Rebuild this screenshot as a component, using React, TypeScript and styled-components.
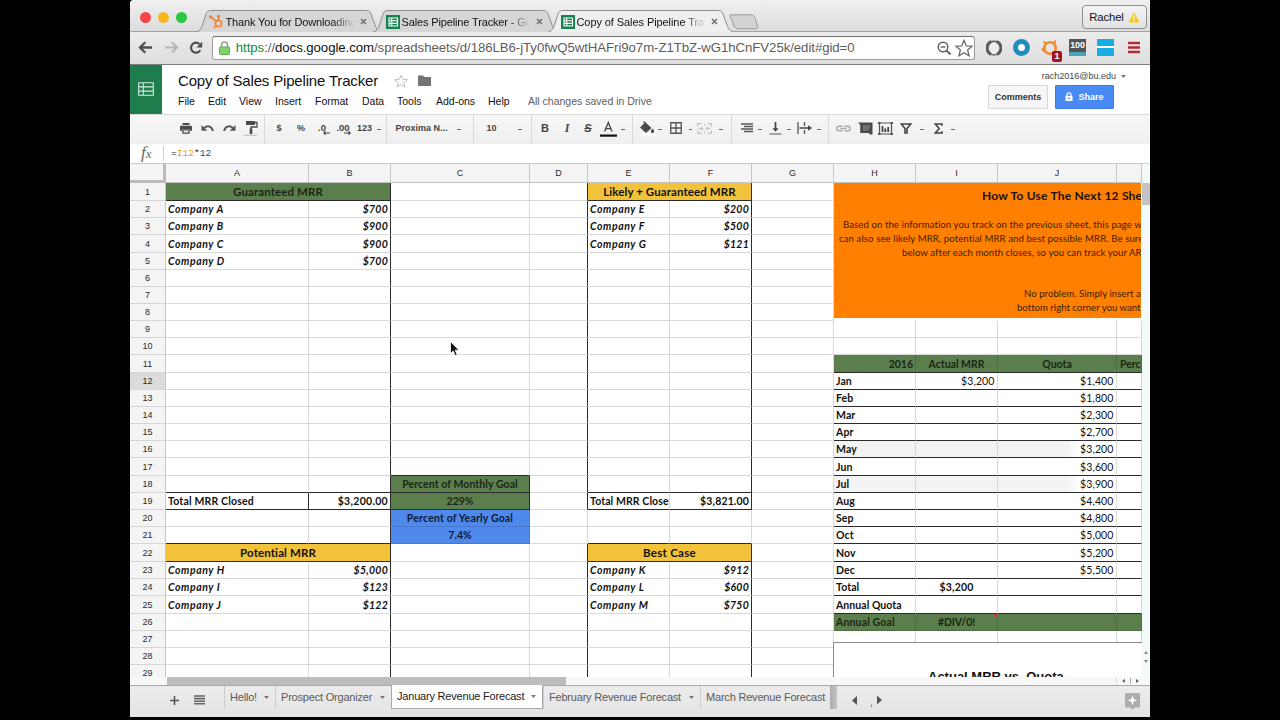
import React from "react";
import styled, { createGlobalStyle, css } from "styled-components";

const GlobalStyle = createGlobalStyle`
  * { box-sizing: border-box; }
  html, body { margin: 0; padding: 0; background: #000; }
  body { width: 1280px; height: 720px; overflow: hidden; font-family: "Liberation Sans", Arial, sans-serif; }
  svg { display: block; flex: none; }
`;

const Stage = styled.div`
  width: 1280px;
  height: 720px;
  padding: 0 130px 3px;
  background: #000;
`;

const Window = styled.div`
  position: relative;
  width: 1020px;
  height: 717px;
  display: flex;
  flex-direction: column;
  overflow: hidden;
  background: #fff;
  border-radius: 4px 0 0 0;
`;

/* ---------- Browser chrome ---------- */

const TitleBar = styled.div`
  flex: none;
  height: 32px;
  display: flex;
  padding: 0 3px 0 9.5px;
  background: linear-gradient(#f0f0f0, #dcdcdc);
  box-shadow: inset 0 -1px 0 #a2a2a2;
`;

const Lights = styled.div`
  display: flex;
  gap: 7px;
  padding-top: 11.5px;
  width: 56.5px;
`;

const Light = styled.span<{ $color: string }>`
  width: 11px;
  height: 11px;
  border-radius: 50%;
  background: ${(p) => p.$color};
`;

const TabStrip = styled.div`
  flex: 1;
  display: flex;
  padding-top: 10px;
`;

const TabBox = styled.div<{ $active?: boolean; $step: number }>`
  position: relative;
  width: 186px;
  height: 22px;
  margin-right: ${(p) => p.$step - 186}px;
  z-index: ${(p) => (p.$active ? 2 : 1)};
  display: flex;
  align-items: center;
  padding: 1px 0 0 13px;
  & > * { position: relative; }
`;

const TabShape = styled.svg`
  && { position: absolute; }
  inset: 0;
`;

const TabTitle = styled.span<{ $ls: number }>`
  width: 130px;
  margin-left: 1.5px;
  overflow: hidden;
  white-space: nowrap;
  font-size: 11px;
  letter-spacing: ${(p) => p.$ls}px;
  color: #111;
  mask-image: linear-gradient(90deg, #000 82%, transparent 99%);
`;

const TabClose = styled.svg`
  margin-left: 4.5px;
`;

const ProfileButton = styled.div`
  align-self: flex-start;
  margin-top: 5px;
  width: 65px;
  height: 24px;
  display: flex;
  align-items: center;
  justify-content: center;
  gap: 4px;
  border: 1px solid #8f8f8f;
  border-radius: 4px;
  background: linear-gradient(#f3f3f3, #e2e2e2);
  font-size: 11.3px;
  letter-spacing: -0.1px;
  color: #111;
`;

const NavBar = styled.div`
  flex: none;
  height: 33px;
  display: flex;
  align-items: center;
  padding: 0 8px 1px 8px;
  background: linear-gradient(#ececec, #dedede);
  border-bottom: 1px solid #7d7d7d;
`;

const NavIcons = styled.div`
  width: 74px;
  display: flex;
  align-items: center;
  gap: 10.5px;
`;

const Address = styled.div`
  width: 765px;
  height: 24px;
  display: flex;
  align-items: center;
  padding: 0 1px 0 6px;
  border: 1px solid #9c9c9c;
  border-top-color: #6f6f6f;
  border-radius: 3px;
  background: #fff;
`;

const Url = styled.span`
  flex: 1;
  margin-left: 6px;
  font-size: 13.2px;
  letter-spacing: -0.05px;
  white-space: nowrap;
  color: #5d5d5d;
  b { font-weight: 400; color: #111; }
  i { font-style: normal; color: #168a2c; }
`;

const Extensions = styled.div`
  margin-left: 10px;
  display: flex;
  align-items: center;
  gap: 11px;
`;

const ExtSlot = styled.div`
  position: relative;
  width: 17px;
  height: 18px;
  display: flex;
  align-items: center;
  justify-content: center;
`;

const Badge = styled.span`
  position: absolute;
  right: -4px;
  bottom: -5px;
  width: 10px;
  height: 11px;
  border-radius: 2px;
  background: #a31426;
  color: #fff;
  font: bold 9px/11px "Liberation Sans", sans-serif;
  text-align: center;
`;

const Hundred = styled.div`
  width: 17px;
  height: 17px;
  background: #555;
  border-bottom: 4px solid #4aa3bd;
  color: #fff;
  font: bold 9px/13px "Liberation Sans", sans-serif;
  letter-spacing: -0.1px;
  text-align: center;
`;

const CyanBlock = styled.div`
  width: 17px;
  height: 17px;
  background: linear-gradient(#16aee5 7px, #fff 7px, #fff 9px, #16aee5 9px);
`;

/* ---------- Document header ---------- */

const DocHeader = styled.div`
  flex: none;
  height: 49px;
  display: flex;
  background: #fff;
`;

const SheetsLogo = styled.div`
  width: 32px;
  height: 49px;
  display: flex;
  align-items: center;
  justify-content: center;
  padding-bottom: 2px;
  background: #1f7d4d;
`;

const DocInfo = styled.div`
  flex: 1;
  padding: 5px 0 0 16px;
`;

const TitleRow = styled.div`
  height: 21px;
  display: flex;
  align-items: center;
`;

const DocTitle = styled.span`
  width: 216px;
  font-size: 15px;
  letter-spacing: -0.17px;
  color: #111;
  white-space: nowrap;
`;

const FolderSlot = styled.span`
  margin-left: 10px;
`;

const MenuRow = styled.div`
  height: 20px;
  display: grid;
  grid-template-columns: 30px 31px 36px 40px 47px 35px 39px 52px 40px 140px;
  align-items: center;
  font-size: 10.5px;
  color: #111;
  white-space: nowrap;
`;

const Saved = styled.span`
  color: #5e5e5e;
`;

const Account = styled.div`
  width: 170px;
  display: flex;
  flex-direction: column;
  align-items: flex-end;
  padding: 4px 24px 0 0;
`;

const Email = styled.div`
  height: 14px;
  display: flex;
  align-items: center;
  gap: 5px;
  font-size: 9px;
  color: #444;
`;

const Actions = styled.div`
  display: flex;
  gap: 7px;
  margin: 2px 12px 0 0;
`;

const ActionButton = styled.div<{ $primary?: boolean }>`
  width: ${(p) => (p.$primary ? 59 : 60)}px;
  height: 24px;
  display: flex;
  align-items: center;
  justify-content: center;
  gap: 5px;
  padding-bottom: 1px;
  border: 1px solid ${(p) => (p.$primary ? "#4079e6" : "#d6d6d6")};
  border-radius: 1px;
  background: ${(p) => (p.$primary ? "#4a8af4" : "#f6f6f6")};
  color: ${(p) => (p.$primary ? "#fff" : "#333")};
  font-size: 9px;
  font-weight: 700;
  letter-spacing: 0.03px;
`;

/* ---------- Toolbar ---------- */

const Toolbar = styled.div`
  flex: none;
  height: 30px;
  display: flex;
  align-items: stretch;
  padding-left: 44.5px;
  border-top: 1px solid #d9d9d9;
  background: linear-gradient(#f7f7f7, #efefef);
`;

const Slot = styled.div<{ $w: number; $left?: number }>`
  flex: none;
  width: ${(p) => p.$w}px;
  display: flex;
  align-items: center;
  justify-content: ${(p) => (p.$left ? "flex-start" : "center")};
  padding: 0 0 3px ${(p) => p.$left || 0}px;
  font-size: 9px;
  font-weight: 700;
  color: #444;
  white-space: nowrap;
`;

const Divider = styled.div<{ $w: number }>`
  flex: none;
  width: ${(p) => p.$w}px;
  background: linear-gradient(#dadada, #dadada) center / 1px 100% no-repeat;
`;

const Dash = styled.span`
  width: 4px;
  height: 1.5px;
  margin-top: 3px;
  background: #6c6c6c;
`;

const Glyph = styled.span<{ $size: number; $italic?: boolean; $strike?: boolean; $serif?: boolean }>`
  font: ${(p) => (p.$italic ? "italic" : "normal")} bold ${(p) => p.$size}px
    ${(p) => (p.$serif ? '"Liberation Serif", serif' : '"Liberation Sans", sans-serif')};
  text-decoration: ${(p) => (p.$strike ? "line-through" : "none")};
`;

const FormulaBar = styled.div`
  flex: none;
  height: 19px;
  display: flex;
  align-items: center;
  padding-left: 11px;
`;

const Fx = styled.span`
  width: 23px;
  height: 15px;
  border-right: 1px solid #d0d0d0;
  font: italic 17px/14px "Liberation Serif", serif;
  color: #666;
  small { font-size: 13px; }
`;

const Formula = styled.span`
  margin-left: 7px;
  font: 9.6px "Liberation Mono", monospace;
  color: #222;
  i { font-style: normal; color: #f0a000; }
  b { font-weight: 400; color: #1155a0; }
`;

/* ---------- Sheet ---------- */

const ROWS = [18, 17, 17, 18, 17, 17, 17, 17, 17, 17, 18, 17, 17, 17, 17, 17, 18, 17, 17, 17, 17, 18, 17, 17, 18, 17, 17, 17, 17];
const COLS = "ABCDEFGHIJK";

const SheetArea = styled.div`
  flex: none;
  height: 514px;
  display: flex;
  overflow: hidden;
`;

const Grid = styled.div`
  position: relative;
  width: 1012px;
  height: 514px;
  overflow: hidden;
  display: grid;
  grid-template-columns: 36px 143px 82px 139px 58px 82px 82px 82px 82px 82px 119px 25px;
  grid-template-rows: 20px ${ROWS.map((h) => h + "px").join(" ")};
`;

const Head = styled.div<{ $selected?: boolean; $row?: boolean }>`
  display: flex;
  align-items: center;
  justify-content: center;
  border-right: 1px solid #c6c6c6;
  border-bottom: 1px solid ${(p) => (p.$row ? "#d5d5d5" : "#c2c2c2")};
  border-top: ${(p) => (p.$row ? "0" : "1px solid #c9c9c9")};
  background: ${(p) => (p.$selected ? "#dcdcdc" : "#f4f4f4")};
  font-size: 9px;
  color: #2a2a2a;
`;

const Corner = styled.div`
  border-top: 1px solid #c9c9c9;
  border-right: 3px solid #bcbcbc;
  border-bottom: 3px solid #bcbcbc;
  background: #f4f4f4;
`;

interface CellStyle {
  bg?: string;
  align?: "left" | "center" | "right";
  bold?: boolean;
  italic?: boolean;
  size?: number;
  ls?: number;
  pad?: number;
  right?: boolean;
  bottom?: boolean;
  color?: string;
}

const INK = "#2b2b2b";

const Cell = styled.div<{ $s: CellStyle; $col: number; $row: number; $cspan: number }>`
  grid-column: ${(p) => p.$col} / span ${(p) => p.$cspan};
  grid-row: ${(p) => p.$row};
  min-width: 0;
  overflow: hidden;
  display: flex;
  align-items: center;
  justify-content: ${(p) => (p.$s.align === "right" ? "flex-end" : p.$s.align === "center" ? "center" : "flex-start")};
  padding: 0 ${(p) => p.$s.pad ?? 2}px;
  border-right: 1px solid ${(p) => (p.$s.right ? INK : p.$s.bg && p.$s.bg.startsWith("#") ? "rgba(0,0,0,.12)" : "#d9d9d9")};
  border-bottom: 1px solid ${(p) => (p.$s.bottom ? INK : p.$s.bg ? "rgba(0,0,0,.12)" : "#d9d9d9")};
  background: ${(p) => p.$s.bg || "#fff"};
  font-family: Lato, sans-serif;
  font-variant-ligatures: none;
  font-size: ${(p) => p.$s.size || 10.5}px;
  font-weight: ${(p) => (p.$s.bold ? 700 : 400)};
  font-style: ${(p) => (p.$s.italic ? "italic" : "normal")};
  letter-spacing: ${(p) => p.$s.ls || 0}px;
  color: ${(p) => p.$s.color || "#111"};
  white-space: nowrap;
`;

const Instructions = styled.div`
  grid-column: 9 / span 4;
  grid-row: 2 / span 8;
  overflow: hidden;
  margin: 0 1px 3px 0;
  padding: 5px 0 0 1px;
  background: #ff7f00;
  font-family: Lato, sans-serif;
  font-variant-ligatures: none;
  white-space: nowrap;
`;

const InstructionTitle = styled.div`
  height: 16px;
  padding-left: 147px;
  font-size: 12px;
  font-weight: 700;
  line-height: 16px;
  letter-spacing: 0.2px;
  color: #1c1208;
`;

const InstructionLine = styled.div<{ $indent: number; $ls?: number }>`
  height: 13.85px;
  padding-left: ${(p) => p.$indent}px;
  font-size: 9.6px;
  line-height: 14px;
  letter-spacing: ${(p) => p.$ls || 0}px;
  color: #3d1e00;
`;

const ChartCard = styled.div`
  position: absolute;
  left: 703px;
  top: 479px;
  width: 330px;
  height: 60px;
  padding: 26px 0 0 94px;
  border: 1px solid #8c8c8c;
  background: #fff;
  font: bold 13px "Liberation Sans", sans-serif;
  color: #111;
`;

const NoteFlag = styled.span`
  position: absolute;
  left: 863px;
  top: 451px;
  border: 2px solid transparent;
  border-top-color: #c43c2c;
  border-right-color: #c43c2c;
`;

const VScroll = styled.div`
  width: 8px;
  display: flex;
  flex-direction: column;
  background: #f4fafa;
  border-top: 1px solid #d6d6d6;
`;

const VThumb = styled.div`
  height: 22px;
  margin: 19px 0 446px;
  background: #c3c3c3;
`;

const VArrows = styled.div`
  height: 24px;
  display: flex;
  flex-direction: column;
  align-items: center;
  gap: 6px;
`;

const HScroll = styled.div`
  flex: none;
  height: 8px;
  display: flex;
  justify-content: space-between;
  padding-left: 37px;
  background: #f8f8f8;
`;

const HThumb = styled.div`
  width: 399px;
  height: 8px;
  background: #bdbdbd;
`;

const HArrows = styled.div`
  width: 34px;
  display: flex;
  align-items: center;
  gap: 5px;
  padding-left: 5px;
  border-left: 1px solid #ddd;
`;

/* ---------- Sheet tabs ---------- */

const TabsBar = styled.div`
  flex: none;
  height: 32px;
  display: flex;
  border-top: 1px solid #a9a9a9;
  background: linear-gradient(#ececec, #e3e3e3);
`;

const BarIcon = styled.div<{ $w: number; $pad?: number }>`
  width: ${(p) => p.$w}px;
  height: 28px;
  display: flex;
  align-items: center;
  justify-content: flex-start;
  padding-left: ${(p) => p.$pad || 0}px;
`;

const SheetTab = styled.div<{ $w: number; $active?: boolean }>`
  flex: none;
  width: ${(p) => p.$w}px;
  height: 23px;
  display: flex;
  align-items: center;
  justify-content: space-between;
  padding: 0 6px 1px 5px;
  overflow: hidden;
  white-space: nowrap;
  font-size: 11px;
  letter-spacing: -0.2px;
  color: #5a5a5a;
  border-left: 1px solid #cdcdcd;
  ${(p) =>
    p.$active &&
    css`
      margin-top: -1px;
      height: 24px;
      background: #fff;
      color: #222;
      border: 1px solid #a8a8a8;
      border-top: 0;
    `}
`;

const ScrollShade = styled.div`
  width: 7px;
  height: 23px;
  background: linear-gradient(90deg, #adadad, #c4c4c4);
`;

const Explore = styled.div`
  flex: 1;
  display: flex;
  justify-content: flex-end;
  padding: 7px 10px 0 0;
`;

/* ---------- Icons ---------- */

const Caret = ({ size = 5, color = "#777" }: { size?: number; color?: string }) => (
  <svg width={size} height={size * 0.6} viewBox="0 0 10 6"><path d="M0 0h10L5 6z" fill={color} /></svg>
);

const SheetsIcon = () => (
  <svg width="14" height="14" viewBox="0 0 14 14">
    <rect width="14" height="14" fill="#16824f" />
    <path d="M3 3h8.5v8H3zM3 5.7h8.5M3 8.4h8.5M5.7 3v8" fill="none" stroke="#fff" strokeWidth="1.1" />
  </svg>
);

const HubspotIcon = () => (
  <svg width="15" height="14" viewBox="0 0 15 14" fill="none" stroke="#f08336" strokeWidth="1.7">
    <circle cx="9.5" cy="8.4" r="3.1" />
    <path d="M9.5 5.3V1M7.2 6.2L2 2M7.2 10.6L4.6 13" />
    <circle cx="9.5" cy="1.4" r=".8" /><circle cx="1.6" cy="1.8" r=".8" />
  </svg>
);

const ArrowLeft = ({ color }: { color: string }) => (
  <svg width="15" height="13" viewBox="0 0 15 13" fill="none" stroke={color} strokeWidth="2.3">
    <path d="M14 6.5H2.5M7.3 1.3L2 6.5l5.3 5.2" />
  </svg>
);

const ArrowRight = ({ color }: { color: string }) => (
  <svg width="15" height="13" viewBox="0 0 15 13" fill="none" stroke={color} strokeWidth="2">
    <path d="M1 6.5h11.5M8 1.5l5 5-5 5" />
  </svg>
);

const Reload = () => (
  <svg width="14" height="14" viewBox="0 0 14 14">
    <path d="M11.3 9.3A5 5 0 1 1 10.4 3" fill="none" stroke="#4f4f4f" strokeWidth="2.2" />
    <path d="M13.2.6v5.8H7.4z" fill="#4f4f4f" />
  </svg>
);

const UrlLock = () => (
  <svg width="11" height="14" viewBox="0 0 11 14">
    <path d="M2.5 6.5V4a3 3 0 0 1 6 0v2.5" fill="none" stroke="#9c9c9c" strokeWidth="1.5" />
    <rect x=".5" y="6" width="10" height="7.5" rx="1" fill="#7fd268" stroke="#5dab4b" />
  </svg>
);

const ZoomOut = () => (
  <svg width="15" height="14" viewBox="0 0 15 14" fill="none" stroke="#5f5f5f" strokeWidth="1.4">
    <circle cx="6" cy="6" r="4.8" /><path d="M3.6 6h4.8" /><path d="M9.6 9.6l4 3.8" strokeWidth="2" />
  </svg>
);

const AddressIcons = styled.div`
  display: flex;
  align-items: center;
  gap: 3px;
`;

const Star = ({ size, color }: { size: number; color: string }) => (
  <svg width={size} height={size} viewBox="0 0 16 16">
    <path d="M8 1.2l2 4.9 5.2.3-4 3.4 1.3 5.1L8 12.1l-4.5 2.8 1.3-5.1-4-3.4L6 6.1z" fill="none" stroke={color} strokeWidth="1.1" />
  </svg>
);

const Warning = () => (
  <svg width="12" height="11" viewBox="0 0 12 11">
    <path d="M6 .5L11.6 10.5H.4z" fill="#f6c915" /><path d="M6 3.8v3.5M6 8.2v1.3" stroke="#fff" strokeWidth="1.2" />
  </svg>
);

const Folder = () => (
  <svg width="13" height="11" viewBox="0 0 13 11"><path d="M0 .5h5l1.3 1.5H13v9H0z" fill="#747474" /></svg>
);

const ShareLock = () => (
  <svg width="8" height="9" viewBox="0 0 8 9">
    <path d="M2 4V2.8a2 2 0 0 1 4 0V4" fill="none" stroke="#fff" strokeWidth="1.2" />
    <path d="M.5 3.8h7V9h-7z" fill="#fff" /><circle cx="4" cy="6.3" r=".9" fill="#4a8af4" />
  </svg>
);

const Printer = () => (
  <svg width="12" height="11" viewBox="0 0 12 11">
    <path d="M2.5 0h7v2h-7zM1.2 2.8h9.6c.7 0 1.2.5 1.2 1.2v3.7H9.8V6H2.2v1.7H0V4c0-.7.5-1.2 1.2-1.2z" fill="#4a4a4a" />
    <path d="M3 6.8h6v3.4H3z" fill="none" stroke="#4a4a4a" strokeWidth="1.3" />
  </svg>
);

const Undo = ({ flip }: { flip?: boolean }) => (
  <svg width="13" height="8" viewBox="0 0 13 8">
    <g transform={flip ? "translate(13 0) scale(-1 1)" : undefined}>
      <path d="M2.5 4.5C5.5 1 10.5 1.5 12 7" fill="none" stroke="#555" strokeWidth="1.9" />
      <path d="M.5 1v5.8h5.8z" fill="#555" />
    </g>
  </svg>
);

const PaintRoller = () => (
  <svg width="14" height="16" viewBox="0 0 14 16">
    <path d="M2 1h9v4H2z" fill="#4a4a4a" /><path d="M11 2.5h2V7H7v2" fill="none" stroke="#4a4a4a" strokeWidth="1.3" />
    <path d="M5.7 8.5h2.6V14H5.7z" fill="#4a4a4a" /><path d="M0 15.3h13" stroke="#bbb" />
  </svg>
);

const DecimalSlot = styled.span`
  display: flex;
  flex-direction: column;
  align-items: center;
  padding-top: 2px;
  font-size: 9.5px;
  line-height: 9px;
  svg { margin: -1px 0 0 8px; }
`;

const Decimal = ({ text, back }: { text: string; back?: boolean }) => (
  <DecimalSlot>
    {text}
    <svg width="7" height="4" viewBox="0 0 7 4">
      <path d={back ? "M.5 2H7M2.5.3L.8 2l1.7 1.7" : "M0 2h6.5M4.5.3L6.2 2 4.5 3.7"} fill="none" stroke="#444" strokeWidth="1.1" />
    </svg>
  </DecimalSlot>
);

const TextColor = () => (
  <svg width="17" height="17" viewBox="0 0 17 17">
    <path d="M4.6 11.5L8.3 2.5l3.7 9M5.8 8.6h5" fill="none" stroke="#444" strokeWidth="1.3" />
    <path d="M0 14.5h17v2.2H0z" fill="#111" />
  </svg>
);

const Bucket = () => (
  <svg width="17" height="16" viewBox="0 0 17 16">
    <path d="M3.5 1.5l7 6.5L6 12 1 7.5 5.5 3" fill="#4a4a4a" stroke="#4a4a4a" strokeWidth="1.4" />
    <path d="M12.5 8.5c1.2 1.6 1.6 2.3 1.6 2.9a1.6 1.6 0 0 1-3.2 0c0-.6.4-1.3 1.6-2.9z" fill="#4a4a4a" />
    <path d="M0 14.5h16" stroke="#fff" strokeWidth="2" />
  </svg>
);

const Borders = () => (
  <svg width="12" height="12" viewBox="0 0 11 11"><path d="M.7.7h9.6v9.6H.7zM5.5.7v9.6M.7 5.5h9.6" fill="none" stroke="#555" strokeWidth="1.2" /></svg>
);

const Merge = () => (
  <svg width="15" height="11" viewBox="0 0 15 11" fill="none" stroke="#c3c3c3" strokeWidth="1.2">
    <path d="M4.5.7H.7v3M10.5.7h3.8v3M.7 7.3v3h3.8M14.3 7.3v3h-3.8M7.5.7v2M7.5 8.3v2M1.5 5.5h4M4 4l1.8 1.5L4 7M13.5 5.5h-4M11 4L9.2 5.5 11 7" />
  </svg>
);

const AlignRight = () => (
  <svg width="13" height="10" viewBox="0 0 13 10"><path d="M1 1h12M4 3.5h9M1 6h12M4 8.5h9" stroke="#555" strokeWidth="1.3" /></svg>
);

const AlignBottom = () => (
  <svg width="13" height="13" viewBox="0 0 13 13"><path d="M6.5 0v8" stroke="#444" strokeWidth="1.7" /><path d="M3.5 6.3h6l-3 3.5z" fill="#444" /><path d="M.5 12h12" stroke="#777" strokeWidth="1.3" /></svg>
);

const Wrap = () => (
  <svg width="15" height="12" viewBox="0 0 15 12"><path d="M1 0v12M7.5 0v4M7.5 8v4" stroke="#555" strokeWidth="1.3" /><path d="M2.5 6h9" stroke="#444" strokeWidth="1.5" /><path d="M11 3.3v5.4L15 6z" fill="#444" /></svg>
);

const LinkIcon = () => (
  <svg width="15" height="7" viewBox="0 0 15 7" fill="none" stroke="#aaa" strokeWidth="1.4"><path d="M6.5 1.2H3a2.3 2.3 0 0 0 0 4.6h3.5M8.5 1.2H12a2.3 2.3 0 0 1 0 4.6H8.5M4.5 3.5h6" /></svg>
);

const CommentIcon = () => (
  <svg width="15" height="13" viewBox="0 0 15 13"><path d="M0 .5h14.5v12H12L10.8 11H2.2V3z" fill="#4a4a4a" /><path d="M5 4h7M5 6h7M5 8h5" stroke="#aaa" strokeWidth=".8" /></svg>
);

const ChartIcon = () => (
  <svg width="15" height="13" viewBox="0 0 15 13"><path d="M1.5 1h12v11h-12z" fill="none" stroke="#555" strokeWidth="1.2" /><path d="M4.5 10V4M7.3 10V6.5M10.2 10V5" stroke="#444" strokeWidth="1.8" /><path d="M0 0h2.5v2H0zM12.5 0H15v2h-2.5zM0 11h2.5v2H0zM12.5 11H15v2h-2.5z" fill="#555" /></svg>
);

const Funnel = () => (
  <svg width="12" height="11" viewBox="0 0 12 11"><path d="M1.3 1h9.4L7 5.5V10H5V5.5z" fill="none" stroke="#444" strokeWidth="1.6" /></svg>
);

const Sigma = () => (
  <svg width="9" height="11" viewBox="0 0 9 11"><path d="M8 2.8V1H1.2l4 4.5-4 4.5H8V8.2" fill="none" stroke="#444" strokeWidth="1.6" /></svg>
);

const ExploreIcon = () => (
  <svg width="15" height="17" viewBox="0 0 15 17">
    <path d="M1 0h13a1 1 0 0 1 1 1v12.5a1 1 0 0 1-1 1H9.5L7.5 17l-2-2.5H1a1 1 0 0 1-1-1V1a1 1 0 0 1 1-1z" fill="#adadad" />
    <path d="M7.5 2.5L8.8 6l3.7 1.3-3.7 1.3-1.3 3.7-1.3-3.7L2.5 7.3 6.2 6z" fill="#fff" />
  </svg>
);

const Cursor = styled.svg`
  position: absolute;
  left: 319px;
  top: 340px;
`;

const NewTab = styled.svg`
  margin: 4px 0 0 6px;
`;

/* ---------- Sheet data ---------- */

const GREEN = "#5b7f4c";
const YELLOW = "#f1c23a";
const BLUE = "#5089ec";

type Entry = { text?: string; cs?: number } & CellStyle;
const data: Record<string, Entry> = {};
const put = (key: string, e: Entry) => { data[key] = { ...data[key], ...e }; };

const heading: Entry = { align: "center", bold: true, cs: 2, size: 11.5, bottom: true, right: true, ls: 0.1 };
put("A1", { ...heading, text: "Guaranteed MRR", bg: GREEN, color: "#1b2617" });
put("E1", { ...heading, text: "Likely + Guaranteed MRR", bg: YELLOW });
put("A22", { ...heading, text: "Potential MRR", bg: YELLOW });
put("E22", { ...heading, text: "Best Case", bg: YELLOW, ls: 0.3 });

const deals = (nameCol: string, valueCol: string, start: number, rows: [string, string][]) =>
  rows.forEach(([name, value], i) => {
    put(nameCol + (start + i), { text: name, bold: true, italic: true, ls: 0.58 });
    put(valueCol + (start + i), { text: value, bold: true, italic: true, align: "right", ls: 0.25 });
  });
deals("A", "B", 2, [["Company A", "$700"], ["Company B", "$900"], ["Company C", "$900"], ["Company D", "$700"]]);
deals("E", "F", 2, [["Company E", "$200"], ["Company F", "$500"], ["Company G", "$121"]]);
deals("A", "B", 23, [["Company H", "$5,000"], ["Company I", "$123"], ["Company J", "$122"]]);
deals("E", "F", 23, [["Company K", "$912"], ["Company L", "$600"], ["Company M", "$750"]]);

put("A19", { text: "Total MRR Closed", bold: true, right: true, ls: 0.17 });
put("B19", { text: "$3,200.00", bold: true, align: "right", ls: 0.3 });
put("E19", { text: "Total MRR Close", bold: true, ls: 0.1 });
put("F19", { text: "$3,821.00", bold: true, align: "right", ls: 0.15 });

put("C18", { text: "Percent of Monthly Goal", bg: GREEN, color: "#1b2617", bold: true, align: "center", bottom: true, right: true, ls: 0.07 });
put("C19", { text: "229%", bg: GREEN, color: "#1b2617", bold: true, align: "center", bottom: true, right: true });
put("C20", { text: "Percent of Yearly Goal", bg: BLUE, color: "#0c1a33", bold: true, align: "center", ls: 0.17 });
put("C21", { text: "7.4%", bg: BLUE, color: "#0c1a33", bold: true, align: "center" });
put("C17", { bottom: true });

for (let r = 1; r <= 29; r++) {
  put("B" + r, { right: true });
  if (r !== 20 && r !== 21) { put("D" + r, { right: true }); put("F" + r, { right: true }); }
}
for (const c of "ABEF") for (const r of [18, 19, 21]) put(c + r, { bottom: true });

const tableHead: Entry = { bg: GREEN, color: "#1b2617", bold: true, bottom: true };
put("H11", { ...tableHead, text: "2016", align: "right" });
put("I11", { ...tableHead, text: "Actual MRR", align: "center" });
put("J11", { ...tableHead, text: "Quota", align: "center" });
put("K11", { ...tableHead, text: "Perc", pad: 3 });

const quotas: [string, string][] = [
  ["Jan", "$1,400"], ["Feb", "$1,800"], ["Mar", "$2,300"], ["Apr", "$2,700"], ["May", "$3,200"], ["Jun", "$3,600"],
  ["Jul", "$3,900"], ["Aug", "$4,400"], ["Sep", "$4,800"], ["Oct", "$5,000"], ["Nov", "$5,200"], ["Dec", "$5,500"],
];
quotas.forEach(([month, quota], i) => {
  const r = 12 + i;
  put("H" + r, { text: month, bold: true, ls: 0.1 });
  put("J" + r, { text: quota, align: "right", pad: 2.5, ls: 0.1 });
  if (month === "May" || month === "Jul") {
    put("H" + r, { bg: "#f3f3f3" });
    put("I" + r, { bg: "#f3f3f3" });
    put("J" + r, { bg: "linear-gradient(90deg, #f3f3f3 70px, #fff 82px)" });
  }
});
put("I12", { text: "$3,200", align: "right", pad: 2.5, ls: 0.1 });
put("H24", { text: "Total", bold: true, ls: 0.1 });
put("I24", { text: "$3,200", bold: true, align: "center", ls: 0.2 });
put("H25", { text: "Annual Quota", bold: true, ls: 0.05 });
for (const c of "HIJK") {
  for (let r = 12; r <= 25; r++) put(c + r, { bottom: true });
  put(c + "26", { bg: GREEN, color: "#1b2617" });
}
put("H26", { text: "Annual Goal", bold: true, ls: 0.15 });
put("I26", { text: "#DIV/0!", bold: true, align: "center", ls: -0.1 });

const covered = (c: number, r: number) => {
  if (c >= 7 && r <= 8) return true;
  return (r === 1 || r === 22) && (c === 1 || c === 5);
};

const Sheet = () => (
  <Grid>
    <Corner />
    {COLS.split("").map((c) => <Head key={c}>{c === "K" ? "" : c}</Head>)}
    {ROWS.map((_, i) => {
      const r = i + 1;
      return (
        <React.Fragment key={r}>
          <Head $row $selected={r === 12}>{r}</Head>
          {COLS.split("").map((name, c) => {
            if (covered(c, r)) return null;
            const { text, cs, ...s } = data[name + r] || {};
            return <Cell key={name} $s={s} $col={c + 2} $row={r + 1} $cspan={cs || 1}>{text}</Cell>;
          })}
        </React.Fragment>
      );
    })}
    <Instructions>
      <InstructionTitle>How To Use The Next 12 She</InstructionTitle>
      <InstructionLine $indent={0}>&nbsp;</InstructionLine>
      <InstructionLine $indent={8} $ls={0.08}>Based on the information you track on the previous sheet, this page w</InstructionLine>
      <InstructionLine $indent={4} $ls={0.1}>can also see likely MRR, potential MRR and best possible MRR. Be sure</InstructionLine>
      <InstructionLine $indent={67} $ls={0.06}>below after each month closes, so you can track your AR</InstructionLine>
      <InstructionLine $indent={0}>&nbsp;</InstructionLine>
      <InstructionLine $indent={0}>&nbsp;</InstructionLine>
      <InstructionLine $indent={189} $ls={0.04}>No problem. Simply insert a</InstructionLine>
      <InstructionLine $indent={182}>bottom right corner you want</InstructionLine>
    </Instructions>
    <NoteFlag />
    <ChartCard>Actual MRR vs. Quota</ChartCard>
  </Grid>
);

const BrowserTab = ({ icon, title, active, step, ls = 0 }: { icon: React.ReactNode; title: string; active?: boolean; step: number; ls?: number }) => (
  <TabBox $active={active} $step={step}>
    <TabShape width="186" height="22" viewBox="0 0 186 22">
      <path
        d="M0 22C4 21 5 19 6.5 15L10 4C11 1.5 12 .5 14.5.5h156c2.5 0 3.5 1 4.500 3.500l4 11c1.500 4 2.500 6 7 7"
        fill={active ? "#efefef" : "#d6d6d6"} stroke="#8e8e8e"
      />
    </TabShape>
    {icon}
    <TabTitle $ls={ls}>{title}</TabTitle>
    <TabClose width="7" height="7" viewBox="0 0 7 7"><path d="M1 1l5 5M6 1L1 6" stroke="#6e6e6e" strokeWidth="1.5" /></TabClose>
  </TabBox>
);

export default function App() {
  return (
    <Stage>
      <GlobalStyle />
      <Window>
        <TitleBar>
          <Lights>
            <Light $color="#f9424a" /><Light $color="#f9b61c" /><Light $color="#27c840" />
          </Lights>
          <TabStrip>
            <BrowserTab icon={<HubspotIcon />} title="Thank You for Downloading" step={177} ls={-0.14} />
            <BrowserTab icon={<SheetsIcon />} title="Sales Pipeline Tracker - Go" step={175} ls={-0.14} />
            <BrowserTab icon={<SheetsIcon />} title="Copy of Sales Pipeline Trac" active step={175} ls={-0.08} />
            <NewTab width="30" height="16" viewBox="0 0 30 16">
              <path d="M2 .8h20c2 0 3 .7 4 3l2.5 8c.8 2.200 0 3-2 3H9c-2 0-3-1-4-3L1.500 3.500C.8 1.800.5.8 2 .8z" fill="#d2d2d2" stroke="#9a9a9a" />
            </NewTab>
          </TabStrip>
          <ProfileButton>Rachel <Warning /></ProfileButton>
        </TitleBar>
        <NavBar>
          <NavIcons>
            <ArrowLeft color="#4f4f4f" />
            <ArrowRight color="#b4b4b4" />
            <Reload />
          </NavIcons>
          <Address>
            <UrlLock />
            <Url><i>https</i>://<b>docs.google.com</b>/spreadsheets/d/186LB6-jTy0fwQ5wtHAFri9o7m-Z1TbZ-wG1hCnFV25k/edit#gid=0</Url>
            <AddressIcons>
              <ZoomOut />
              <Star size={18} color="#666" />
            </AddressIcons>
          </Address>
          <Extensions>
            <ExtSlot>
              <svg width="16" height="16" viewBox="0 0 16 16">
                <path d="M5.500 1.500A7 7 0 0 0 5 14.300M10.500 1.500A7 7 0 0 1 11 14.300" fill="none" stroke="#5b5b5b" strokeWidth="3" />
                <path d="M5 3.500h6.500v7L9 14.500H7L4.500 10z" fill="#efefef" />
                <path d="M5 2.500Q8 0 11 2.500M5 14Q8 16 11 14" fill="none" stroke="#5b5b5b" strokeWidth="1.4" />
              </svg>
            </ExtSlot>
            <ExtSlot>
              <svg width="17" height="17" viewBox="0 0 17 17"><circle cx="8.5" cy="8.5" r="6" fill="#fff" stroke="#1c8dc0" strokeWidth="5" /></svg>
            </ExtSlot>
            <ExtSlot>
              <svg width="18" height="18" viewBox="0 0 18 18" fill="none" stroke="#f28a2a" strokeWidth="2.6">
                <circle cx="9" cy="9" r="5.8" /><path d="M2.500 2.500l3 2.500M14.500 1.500L13 4.500M1 9.500l2.500 3" strokeWidth="2" />
              </svg>
              <Badge>1</Badge>
            </ExtSlot>
            <ExtSlot><Hundred>100</Hundred></ExtSlot>
            <ExtSlot><CyanBlock /></ExtSlot>
            <ExtSlot>
              <svg width="12" height="13" viewBox="0 0 12 13"><path d="M0 2h12M0 6.500h12M0 11h12" stroke="#b02a37" strokeWidth="2.6" /></svg>
            </ExtSlot>
          </Extensions>
        </NavBar>

        <DocHeader>
          <SheetsLogo>
            <svg width="16" height="14" viewBox="0 0 16 14">
              <path d="M.7.7h14.600v12.600H.7zM.7 4.900h14.600M.7 9.100h14.600M5.300.7v12.600" fill="none" stroke="#d6ebdf" strokeWidth="1.1" />
            </svg>
          </SheetsLogo>
          <DocInfo>
            <TitleRow>
              <DocTitle>Copy of Sales Pipeline Tracker</DocTitle>
              <Star size={14} color="#bdbdbd" />
              <FolderSlot><Folder /></FolderSlot>
            </TitleRow>
            <MenuRow>
              <span>File</span><span>Edit</span><span>View</span><span>Insert</span><span>Format</span>
              <span>Data</span><span>Tools</span><span>Add-ons</span><span>Help</span>
              <Saved>All changes saved in Drive</Saved>
            </MenuRow>
          </DocInfo>
          <Account>
            <Email>rach2016@bu.edu <Caret /></Email>
            <Actions>
              <ActionButton>Comments</ActionButton>
              <ActionButton $primary><ShareLock />Share</ActionButton>
            </Actions>
          </Account>
        </DocHeader>

        <Toolbar>
          <Slot $w={22}><Printer /></Slot>
          <Slot $w={22}><Undo /></Slot>
          <Slot $w={21}><Undo flip /></Slot>
          <Slot $w={22}><PaintRoller /></Slot>
          <Divider $w={6} />
          <Slot $w={23}>$</Slot>
          <Slot $w={21}>%</Slot>
          <Slot $w={21}><Decimal text=".0" back /></Slot>
          <Slot $w={21}><Decimal text=".00" /></Slot>
          <Slot $w={22}>123</Slot>
          <Slot $w={7}><Dash /></Slot>
          <Divider $w={7} />
          <Slot $w={63} $left={6}>Proxima N...</Slot>
          <Slot $w={13}><Dash /></Slot>
          <Divider $w={15} />
          <Slot $w={31} $left={6}>10</Slot>
          <Slot $w={17}><Dash /></Slot>
          <Divider $w={6} />
          <Slot $w={21}><Glyph $size={11}>B</Glyph></Slot>
          <Slot $w={23}><Glyph $size={12} $italic $serif>I</Glyph></Slot>
          <Slot $w={19}><Glyph $size={11} $italic $strike>S</Glyph></Slot>
          <Slot $w={22}><TextColor /></Slot>
          <Slot $w={7}><Dash /></Slot>
          <Divider $w={12} />
          <Slot $w={19}><Bucket /></Slot>
          <Slot $w={5}><Dash /></Slot>
          <Slot $w={26}><Borders /></Slot>
          <Slot $w={3}><Dash /></Slot>
          <Slot $w={26}><Merge /></Slot>
          <Slot $w={7}><Dash /></Slot>
          <Divider $w={14} />
          <Slot $w={15}><AlignRight /></Slot>
          <Slot $w={13}><Dash /></Slot>
          <Slot $w={18}><AlignBottom /></Slot>
          <Slot $w={9}><Dash /></Slot>
          <Slot $w={21}><Wrap /></Slot>
          <Slot $w={9}><Dash /></Slot>
          <Divider $w={10} />
          <Slot $w={19}><LinkIcon /></Slot>
          <Slot $w={25}><CommentIcon /></Slot>
          <Slot $w={16}><ChartIcon /></Slot>
          <Slot $w={25}><Funnel /></Slot>
          <Slot $w={7}><Dash /></Slot>
          <Slot $w={25}><Sigma /></Slot>
          <Slot $w={5}><Dash /></Slot>
        </Toolbar>

        <FormulaBar>
          <Fx>f<small>x</small></Fx>
          <Formula>=<i>I12</i>*<b>12</b></Formula>
        </FormulaBar>

        <SheetArea>
          <Sheet />
          <VScroll>
            <VThumb />
            <VArrows>
              <svg width="4" height="3" viewBox="0 0 4 3"><path d="M2 0l2 3H0z" fill="#888" /></svg>
              <svg width="4" height="3" viewBox="0 0 4 3"><path d="M0 0h4L2 3z" fill="#888" /></svg>
            </VArrows>
          </VScroll>
        </SheetArea>
        <HScroll>
          <HThumb />
          <HArrows>
            <svg width="3" height="4" viewBox="0 0 3 4"><path d="M3 0v4L0 2z" fill="#666" /></svg>
            <svg width="1" height="6"><path d="M.5 0v6" stroke="#aaa" /></svg>
            <svg width="3" height="4" viewBox="0 0 3 4"><path d="M0 0v4l3-2z" fill="#666" /></svg>
          </HArrows>
        </HScroll>

        <TabsBar>
          <BarIcon $w={64} $pad={39.5}>
            <svg width="9" height="9" viewBox="0 0 9 9"><path d="M4.5 0v9M0 4.5h9" stroke="#555" strokeWidth="1.6" /></svg>
          </BarIcon>
          <BarIcon $w={30}>
            <svg width="11" height="10" viewBox="0 0 11 10"><path d="M0 1h11M0 3.6h11M0 6.2h11M0 8.8h11" stroke="#666" strokeWidth="1.6" /></svg>
          </BarIcon>
          <SheetTab $w={51}>Hello! <Caret /></SheetTab>
          <SheetTab $w={116}>Prospect Organizer <Caret /></SheetTab>
          <SheetTab $w={152} $active>January Revenue Forecast <Caret /></SheetTab>
          <SheetTab $w={157}>February Revenue Forecast <Caret /></SheetTab>
          <SheetTab $w={130}>March Revenue Forecast</SheetTab>
          <ScrollShade />
          <BarIcon $w={32} $pad={15}>
            <svg width="5" height="9" viewBox="0 0 5 9"><path d="M5 0v9L0 4.5z" fill="#555" /></svg>
          </BarIcon>
          <BarIcon $w={20} $pad={2}>
            <svg width="11" height="14" viewBox="0 0 11 14"><path d="M6 2.5v9L11 7z" fill="#555" /><path d="M0 11.5h1.2V14H0z" fill="#888" /></svg>
          </BarIcon>
          <Explore><ExploreIcon /></Explore>
        </TabsBar>
        <Cursor width="14" height="20" viewBox="0 0 14 20">
          <path d="M1.500 1.500v12l2.700-2.500 2 4.600 2-.9-2-4.500h3.700z" fill="#111" stroke="#fff" strokeWidth=".8" />
        </Cursor>
      </Window>
    </Stage>
  );
}
